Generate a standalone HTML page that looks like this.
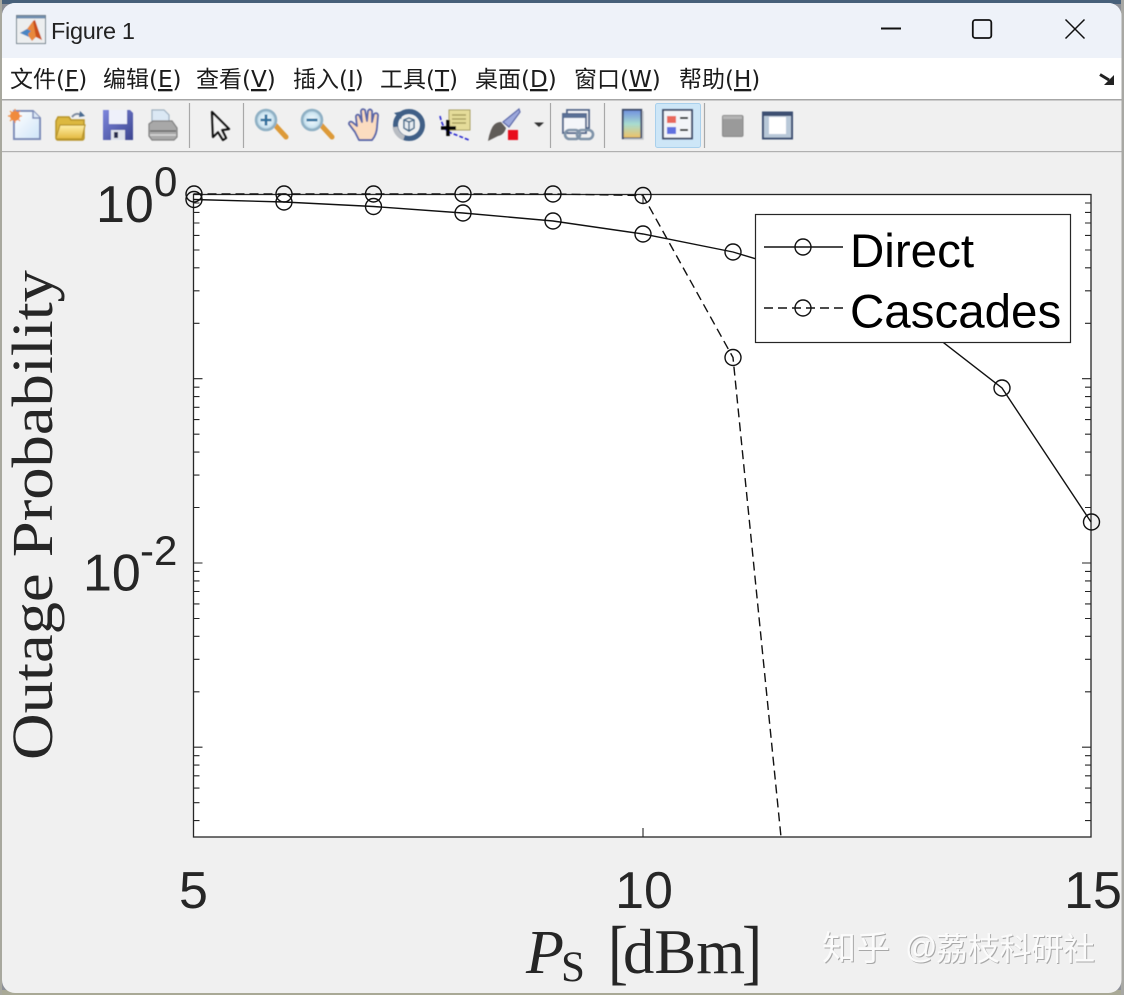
<!DOCTYPE html>
<html><head><meta charset="utf-8"><title>Figure 1</title>
<style>
html,body{margin:0;padding:0;width:1124px;height:995px;overflow:hidden;background:#6d7b86}
svg{display:block}
.mn{font-family:"DejaVu Sans","Noto Sans CJK SC",sans-serif;font-size:23px;fill:#1c1c1c}
.tk{font-family:"Liberation Sans",sans-serif;font-size:52px;fill:#262626}
.sp{font-family:"Liberation Sans",sans-serif;font-size:42px;fill:#262626}
.lg{font-family:"Liberation Sans",sans-serif;font-size:47.5px;fill:#000}
.sf{font-family:"Liberation Serif",serif;fill:#262626}
.wm{font-family:"Liberation Sans","Noto Sans CJK SC",sans-serif}
</style></head><body>
<svg width="1124" height="995" viewBox="0 0 1124 995" xmlns="http://www.w3.org/2000/svg">
<defs>
<linearGradient id="cb" x1="0" y1="0" x2="0" y2="1"><stop offset="0" stop-color="#6f8fe0"/><stop offset=".5" stop-color="#a8dcd0"/><stop offset="1" stop-color="#f2c060"/></linearGradient>
<linearGradient id="fo" x1="0" y1="0" x2="0" y2="1"><stop offset="0" stop-color="#fff0a8"/><stop offset="1" stop-color="#e2b83e"/></linearGradient>
<linearGradient id="pg" x1="0" y1="0" x2="1" y2="1"><stop offset="0" stop-color="#ffffff"/><stop offset="1" stop-color="#cfe4f8"/></linearGradient>
<linearGradient id="sv" x1="0" y1="0" x2="1" y2="1"><stop offset="0" stop-color="#7d86dc"/><stop offset="1" stop-color="#3c4590"/></linearGradient>
<radialGradient id="ln"><stop offset="0" stop-color="#f4fbff"/><stop offset=".7" stop-color="#cfe6f2"/><stop offset="1" stop-color="#9fc0d4"/></radialGradient>
<filter id="bl" x="-2%" y="-20%" width="104%" height="140%"><feGaussianBlur stdDeviation="0.6"/></filter>
</defs>
<!-- backdrop -->
<rect width="1124" height="995" fill="#8d9098"/>
<rect width="1124" height="4" fill="#47607a"/>
<rect x="0" y="990" width="1124" height="5" fill="#a9a996"/>
<rect x="1121" y="0" width="3" height="995" fill="#a8a8a4"/>
<rect x="0" y="0" width="2" height="995" fill="#a8a89e"/>
<!-- window -->
<rect x="2" y="3" width="1119.500" height="990" rx="13" fill="#f0f0f0"/>
<path d="M2 58V16a13 13 0 0 1 13-13H1108.500a13 13 0 0 1 13 13V58Z" fill="#eef2f9"/>
<rect x="2" y="58" width="1119.500" height="41" fill="#fff"/>
<rect x="2" y="99" width="1119.500" height="1.500" fill="#a6a6a6"/>
<rect x="2" y="151" width="1119.500" height="1.200" fill="#b0b0b0"/>
<!-- title icon -->
<g filter="url(#bl)">
<rect x="16.500" y="15.500" width="29" height="28" fill="#eceeef" stroke="#70808c"/>
<rect x="17" y="16" width="28" height="2.500" fill="#6f8fb0"/>
<path d="M20 33l7-4 6-8 2-1 3 9 4 11-6-3-4 4-5-7z" fill="#e8883c"/>
<path d="M20 33l7-4 4 2-3 3 1 3z" fill="#4a86c4"/>
<path d="M33 21l2-1 3 9 4 11-6-3z" fill="#c9501e"/>
</g>
<text x="51" y="39" font-family="'Liberation Sans',sans-serif" font-size="23.500" fill="#222" textLength="84" lengthAdjust="spacing">Figure 1</text>
<!-- window controls -->
<rect x="881" y="27.500" width="20" height="2" fill="#111"/>
<rect x="972.800" y="20" width="18.500" height="18" rx="2.500" fill="none" stroke="#111" stroke-width="1.800"/>
<path d="M1065.500 19.500L1084.500 38.500M1084.500 19.500L1065.500 38.500" stroke="#111" stroke-width="1.500" fill="none"/>
<!-- menu -->
<text class="mn" x="10" y="87">文件(<tspan text-decoration="underline">F</tspan>)</text>
<text class="mn" x="103" y="87">编辑(<tspan text-decoration="underline">E</tspan>)</text>
<text class="mn" x="196" y="87">查看(<tspan text-decoration="underline">V</tspan>)</text>
<text class="mn" x="293" y="87">插入(<tspan text-decoration="underline">I</tspan>)</text>
<text class="mn" x="380" y="87">工具(<tspan text-decoration="underline">T</tspan>)</text>
<text class="mn" x="475" y="87">桌面(<tspan text-decoration="underline">D</tspan>)</text>
<text class="mn" x="574" y="87">窗口(<tspan text-decoration="underline">W</tspan>)</text>
<text class="mn" x="679" y="87">帮助(<tspan text-decoration="underline">H</tspan>)</text>
<path d="M1114 75v10h-10z" fill="#222"/>
<path d="M1100 74.500L1109 80" stroke="#222" stroke-width="3"/>
<!-- toolbar separators -->
<path d="M189.500 103V148M243.500 103V148M550.500 103V148M604.500 103V148M704.500 103V148" stroke="#a8a8a8" stroke-width="1.200"/>
<rect x="655.500" y="103.500" width="45" height="44" rx="2" fill="#cde6f7" stroke="#a9d0ec"/>
<g filter="url(#bl)">
<!-- new -->
<path d="M14 111h19l7 7v21H14z" fill="url(#pg)" stroke="#7d8cb8" stroke-width="2"/>
<path d="M33 111v7h7" fill="#dce8f6" stroke="#7d8cb8" stroke-width="1.500"/>
<circle cx="15" cy="116" r="5" fill="#f08a3c"/>
<path d="M15 109v14M8 116h14M10 111l10 10M20 111l-10 10" stroke="#f08a3c" stroke-width="1.200"/>
<!-- open -->
<path d="M56 121l2-4h11l2 3h13v18a2 2 0 0 1-2 2H58a2 2 0 0 1-2-2z" fill="#dcb840" stroke="#b8942c" stroke-width="1.500"/>
<path d="M56 138l4-13h25l-3 14H57z" fill="url(#fo)" stroke="#b8942c" stroke-width="1.200"/>
<path d="M72 117q4-5 9-2" stroke="#7f8ca0" stroke-width="2" fill="none"/><path d="M80 111l5 5-6 1z" fill="#4a6a90"/>
<!-- save -->
<path d="M103 110h27l3 3v27h-30z" fill="url(#sv)"/>
<rect x="109" y="110" width="18" height="14" fill="#eef0fa"/>
<rect x="111" y="130" width="14" height="10" fill="#dfe2ec"/>
<rect x="114" y="132" width="4" height="6" fill="#2a2e50"/>
<!-- print -->
<path d="M152 110h12l5 5v9h-17z" fill="#dbe8f4" stroke="#9fb0c0" stroke-width="1.200"/>
<path d="M149 124l4-3h19l5 7v9l-3 3h-22l-3-4z" fill="#a8a8a8" stroke="#808080" stroke-width="1.200"/>
<path d="M150 131h26" stroke="#6b6b6b" stroke-width="1.500"/><path d="M150 135h26" stroke="#d8d8d8" stroke-width="1.500"/>
<!-- pointer -->
<path d="M212 112l17 17-7 1 4 8-3 2-5-8-5 5z" fill="#f2f2f2" stroke="#111" stroke-width="2.200" stroke-linejoin="round"/>
<!-- zoom in -->
<path d="M275 125l11 12" stroke="#dd9a38" stroke-width="5" stroke-linecap="round"/>
<circle cx="266" cy="120" r="10" fill="url(#ln)" stroke="#8fb0c4" stroke-width="2.500"/>
<path d="M260.500 120h11M266 114.500v11" stroke="#2f6f9c" stroke-width="2.600"/>
<!-- zoom out -->
<path d="M321 125l11 12" stroke="#dd9a38" stroke-width="5" stroke-linecap="round"/>
<circle cx="312" cy="120" r="10" fill="url(#ln)" stroke="#8fb0c4" stroke-width="2.500"/>
<path d="M306.500 120h11" stroke="#2f6f9c" stroke-width="2.600"/>
<!-- hand -->
<path d="M349 124q0-3 3-2l5 4-1-9q0-3 3-2l3 7-1-11q1-3 4-1l2 11 1-10q2-3 4 0v11l2-8q3-2 4 1l-1 11q0 8-5 14h-13l-4-8z" fill="#fbdcc0" stroke="#5c68a8" stroke-width="1.900" stroke-linejoin="round"/>
<!-- rotate -->
<circle cx="409" cy="125" r="13.500" fill="none" stroke="#3f5f86" stroke-width="5"/>
<path d="M395 127a14 14 0 0 0 9 11" stroke="#b8bcc2" stroke-width="5" fill="none"/>
<path d="M394 113l9-2-2 8z" fill="#3f5f86"/>
<path d="M404 120l5-2 5 2v8l-5 3-5-3zM404 120l5 2 5-2M409 122v9" fill="#e8edf2" stroke="#4a6a88" stroke-width="1.400"/>
<!-- data cursor -->
<rect x="449" y="110" width="21" height="20" fill="#e5dc9a" stroke="#a89f60"/>
<path d="M452 115h14M452 119h14M452 123h14" stroke="#a9a060" stroke-width="1.400"/>
<path d="M440 116q3 14 11 17t18 7" fill="none" stroke="#2626d0" stroke-width="1.600" stroke-dasharray="4 2"/>
<path d="M448 120v16M441 128h15" stroke="#000" stroke-width="3.500"/>
<!-- brush -->
<path d="M503 122l16-13 1 3-11 15z" fill="#9ca8dc" stroke="#5c68a8" stroke-width="1.200"/>
<path d="M491 130q3-8 10-8l5 6q-2 7-8 8l-10 5q1-6 3-11z" fill="#605c58"/>
<rect x="508" y="130" width="10" height="10" fill="#e8101a"/>
<path d="M534 122.500h10l-5 4.500z" fill="#333"/>
<!-- link -->
<rect x="567" y="110" width="22" height="18" fill="#f4f6fa" stroke="#4f6488" stroke-width="1.800"/>
<rect x="563" y="114" width="23" height="19" fill="#f4f6fa" stroke="#4f6488" stroke-width="1.800"/>
<rect x="563" y="114" width="23" height="4" fill="#5a7096"/>
<rect x="565" y="130" width="15" height="9" rx="4.500" fill="none" stroke="#7f93a8" stroke-width="2.600"/>
<rect x="577" y="130" width="16" height="9" rx="4.500" fill="none" stroke="#7f93a8" stroke-width="2.600"/>
<!-- colorbar -->
<rect x="622.800" y="109.800" width="18.500" height="28.500" fill="url(#cb)" stroke="#3c4a66" stroke-width="1.800"/>
<path d="M643 111v28h-19" stroke="#bfc3c8" stroke-width="1.400" fill="none"/>
<!-- legend button -->
<rect x="663" y="110" width="29" height="28.500" fill="#f2f4f8" stroke="#3c4a66" stroke-width="1.800"/>
<rect x="667" y="116" width="9" height="7" fill="#e8685c"/>
<rect x="667" y="127" width="9" height="7" fill="#5f6fe0"/>
<path d="M680 118h8M680 130h8" stroke="#222" stroke-width="2"/>
<!-- grey -->
<rect x="722.500" y="115.500" width="20.500" height="21" rx="1.500" fill="#9a9a9a" stroke="#8a8a8a"/>
<path d="M723 116h19v3h-19z" fill="#b5b5b5"/>
<!-- box -->
<rect x="763" y="112.500" width="29" height="26" fill="#b8c8d8" stroke="#3c4f72" stroke-width="2"/>
<rect x="763" y="112" width="29" height="4" fill="#3c4f72"/>
<rect x="769" y="117" width="17" height="17" fill="#fff"/>
</g>
<!-- axes -->
<rect x="193.500" y="194.500" width="897.500" height="642.500" fill="#fff"/>
<path fill="none" stroke="#262626" stroke-width="1.100" d="M193.500 203h6M193.500 212.400h6M193.500 223h6M193.500 235.400h6M193.500 250h6M193.500 267.800h6M193.500 290.800h6M193.500 323.300h6M193.500 387.200h6M193.500 396.600h6M193.500 407.300h6M193.500 419.600h6M193.500 434.200h6M193.500 452.100h6M193.500 475.100h6M193.500 507.500h6M193.500 571.400h6M193.500 580.900h6M193.500 591.500h6M193.500 603.900h6M193.500 618.500h6M193.500 636.300h6M193.500 659.300h6M193.500 691.800h6M193.500 755.700h6M193.500 765.100h6M193.500 775.800h6M193.500 788.100h6M193.500 802.700h6M193.500 820.600h6M193.500 378.700h9M193.500 563h9M193.500 747.200h9
M1091 203h-6M1091 212.400h-6M1091 223h-6M1091 235.400h-6M1091 250h-6M1091 267.800h-6M1091 290.800h-6M1091 323.300h-6M1091 387.200h-6M1091 396.600h-6M1091 407.300h-6M1091 419.600h-6M1091 434.200h-6M1091 452.100h-6M1091 475.100h-6M1091 507.500h-6M1091 571.400h-6M1091 580.900h-6M1091 591.500h-6M1091 603.900h-6M1091 618.500h-6M1091 636.300h-6M1091 659.300h-6M1091 691.800h-6M1091 755.700h-6M1091 765.100h-6M1091 775.800h-6M1091 788.100h-6M1091 802.700h-6M1091 820.600h-6M1091 378.700h-9M1091 563h-9M1091 747.200h-9
M643 837v-9M643 194.500v9"/>
<rect x="193.500" y="194.500" width="897.500" height="642.500" fill="none" stroke="#262626" stroke-width="1.300"/>
<!-- data -->
<polyline points="193.500,199.500 284,202 373.500,206.500 463,213 553,221 643,234 733,252 823,279 913,319 1002,388 1091,522" fill="none" stroke="#111" stroke-width="1.400"/>
<polyline points="193.500,194 284,194 373.500,194 463,194 553,194 643,195.500 733,357.500 781,837" fill="none" stroke="#111" stroke-width="1.400" stroke-dasharray="9 5"/>
<g fill="none" stroke="#111" stroke-width="1.400">
<circle cx="194" cy="199.500" r="8"/><circle cx="284" cy="202" r="8"/><circle cx="373.500" cy="206.500" r="8"/><circle cx="463" cy="213" r="8"/><circle cx="553" cy="221" r="8"/><circle cx="643" cy="234" r="8"/><circle cx="733" cy="252" r="8"/><circle cx="1002" cy="388" r="8"/><circle cx="1091.500" cy="522" r="8"/>
<circle cx="194" cy="194" r="8"/><circle cx="284" cy="194" r="8"/><circle cx="373.500" cy="194" r="8"/><circle cx="463" cy="194" r="8"/><circle cx="553" cy="194" r="8"/><circle cx="643" cy="195.500" r="8"/><circle cx="733" cy="357.500" r="8"/>
</g>
<!-- legend -->
<rect x="755.500" y="214.500" width="315" height="128" fill="#fff" stroke="#262626" stroke-width="1.200"/>
<path d="M764 247h79" stroke="#111" stroke-width="1.400"/>
<circle cx="803" cy="247" r="8" fill="none" stroke="#111" stroke-width="1.400"/>
<path d="M764 308h81" stroke="#111" stroke-width="1.400" stroke-dasharray="9 5"/>
<circle cx="803" cy="308" r="8" fill="none" stroke="#111" stroke-width="1.400"/>
<text class="lg" x="850" y="267">Direct</text>
<text class="lg" x="850" y="327.500">Cascades</text>
<!-- tick labels -->
<text class="tk" x="96" y="222">10</text><text class="sp" x="154" y="196">0</text>
<text class="tk" x="83" y="590.500">10</text><text class="sp" x="140" y="565">-2</text>
<text class="tk" x="193.500" y="908" text-anchor="middle">5</text>
<text class="tk" x="644" y="908" text-anchor="middle">10</text>
<text class="tk" x="1093" y="908" text-anchor="middle">15</text>
<!-- axis labels -->
<text class="sf" font-size="58" transform="translate(52 760) rotate(-90)" textLength="490" lengthAdjust="spacingAndGlyphs">Outage Probability</text>
<text class="sf" font-size="62" font-style="italic" x="526" y="973" textLength="38" lengthAdjust="spacingAndGlyphs">P</text>
<text class="sf" font-size="43" x="561" y="981">S</text>
<text class="sf" font-size="72" x="608" y="976" textLength="20" lengthAdjust="spacingAndGlyphs">[</text>
<text class="sf" font-size="64" x="623" y="973" textLength="122" lengthAdjust="spacingAndGlyphs">dBm</text>
<text class="sf" font-size="72" x="742" y="976" textLength="20" lengthAdjust="spacingAndGlyphs">]</text>
<!-- watermark -->
<g class="wm" fill="#8a8a8a" opacity=".7">
<text x="823" y="961" font-size="34">知乎</text>
<text x="906" y="959" font-size="32">@</text>
<text x="937" y="961" font-size="32" textLength="159">荔枝科研社</text>
</g>
<g class="wm" fill="#fbfbfb">
<text x="822" y="960" font-size="34">知乎</text>
<text x="905" y="958" font-size="32">@</text>
<text x="936" y="960" font-size="32" textLength="159">荔枝科研社</text>
</g>
</svg>
</body></html>
